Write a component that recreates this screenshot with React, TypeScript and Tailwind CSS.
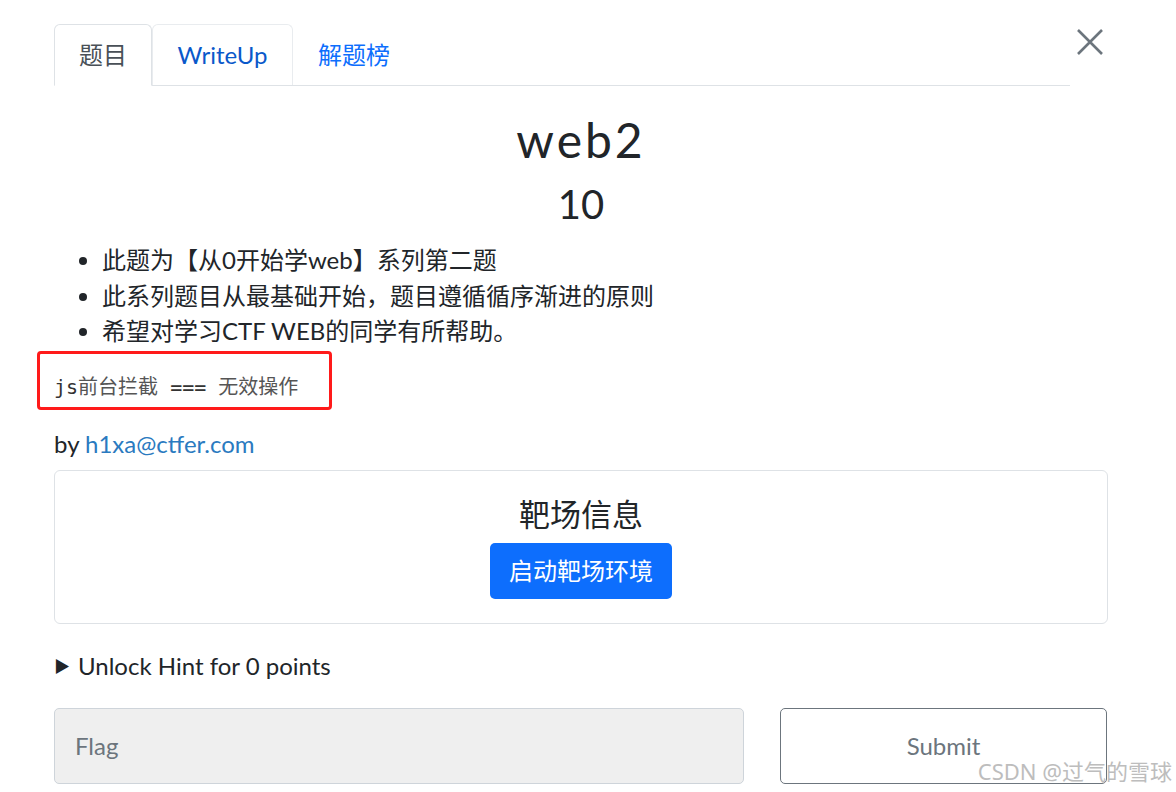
import React from 'react';

export default function App() {
  return (
    <div className="w-[1176px] h-[792px] bg-white overflow-hidden relative text-[#212529] font-['Lato','Noto_Sans_CJK_SC',sans-serif]">
      <div className="pl-[54px] pr-[68px]">
        {/* Tabs + close */}
        <div className="flex items-start pt-[24px]">
          <div className="flex-1 flex border-b border-[#dee2e6] h-[62px]">
            <div className="w-[98px] h-[62px] border border-[#dee2e6] border-b-white rounded-t-[6px] flex items-center justify-center text-[24px] text-[#495057] bg-white">
              题目
            </div>
            <div className="w-[141px] h-[61px] border border-[#e9ecef] border-b-0 rounded-t-[6px] flex items-center justify-center text-[24px] text-[#0a58ca]">
              WriteUp
            </div>
            <div className="w-[122px] h-[61px] flex items-center justify-center text-[24px] text-[#0d6efd]">
              解题榜
            </div>
          </div>
          <button className="w-[36px] h-[36px] ml-[2px] flex items-center justify-center">
            <svg width="28" height="28" viewBox="0 0 28 28" fill="none" stroke="#6c757d" strokeWidth="2.6">
              <path d="M2 2L26 26M26 2L2 26" />
            </svg>
          </button>
        </div>

        {/* Title */}
        <div className="text-center mt-[26px] text-[48px] leading-[56px] tracking-[3px] text-[#212529]">web2</div>
        <div className="text-center mt-[11px] text-[40px] leading-[50px] text-[#212529]">10</div>

        {/* Description */}
        <ul className="mt-[13px] pl-[48px] list-disc text-[24px] leading-[35.5px] text-[#212529]">
          <li>此题为【从0开始学web】系列第二题</li>
          <li>此系列题目从最基础开始，题目遵循循序渐进的原则</li>
          <li>希望对学习CTF WEB的同学有所帮助。</li>
        </ul>

        <div className="relative mt-[23px] h-[30px] flex items-center">
          <span className="font-['DejaVu_Sans_Mono','Noto_Sans_CJK_SC',monospace] text-[20px] leading-[30px] text-[#333]">
            js<span className="text-[#555]">前台拦截</span> === <span className="text-[#555]">无效操作</span>
          </span>
          <div className="absolute left-[-17px] top-[-21px] w-[295px] h-[59px] border-[3px] border-[#ff1a1a] rounded-[4px]" />
        </div>

        <div className="mt-[27px] text-[24px] leading-[30px]">
          by <a className="text-[#2a7ac0]">h1xa@ctfer.com</a>
        </div>

        {/* Card */}
        <div className="mt-[11px] w-[1054px] h-[154px] border border-[#dee2e6] rounded-[6px] flex flex-col items-center">
          <div className="mt-[24px] text-[31px] leading-[38px] text-[#212529]">靶场信息</div>
          <button className="mt-[10px] w-[182px] h-[56px] bg-[#0d6efd] text-white text-[24px] rounded-[5px]">
            启动靶场环境
          </button>
        </div>

        <div className="mt-[26px] flex items-center text-[24px] leading-[32px]">
          <span className="text-[16px] mr-[8px]">▶</span>Unlock Hint for 0 points
        </div>

        <div className="mt-[26px] flex w-[1054px]">
          <div className="w-[690px] h-[76px] bg-[#efefef] border border-[#ced4da] rounded-[5px] flex items-center pl-[20px] text-[24px] text-[#6c757d]">
            Flag
          </div>
          <button className="ml-[36px] w-[327px] h-[76px] border border-[#6c757d] rounded-[5px] text-[24px] text-[#6c757d] bg-white">
            Submit
          </button>
        </div>
      </div>

      <div className="absolute right-[4px] top-[757px] text-[22px] leading-[28px] text-[#bdbdbd] font-['Noto_Sans','Noto_Sans_CJK_SC',sans-serif]">
        CSDN @过气的雪球
      </div>
    </div>
  );
}
